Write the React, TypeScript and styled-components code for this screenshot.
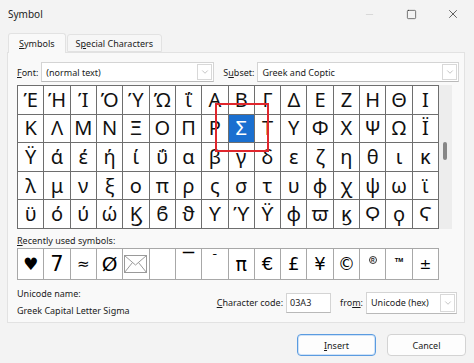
import styled, { createGlobalStyle } from 'styled-components';
import { ChevronDown, Minus, Square, X } from 'lucide-react';

const GlobalStyle = createGlobalStyle`
  html, body {
    margin: 0;
    padding: 0;
    background: #f3f3f3;
  }
  * {
    box-sizing: border-box;
  }
`;

const Window = styled.div`
  width: 474px;
  height: 363px;
  background: #f3f3f3;
  font-family: 'Noto Sans', 'DejaVu Sans', sans-serif;
  color: #1b1b1b;
  display: flex;
  flex-direction: column;
  overflow: hidden;
`;

const TitleBar = styled.div`
  height: 28px;
  display: flex;
  align-items: center;
  padding-left: 8px;
`;

const Title = styled.div`
  flex: 1;
  font-size: 10px;
`;

const WinButton = styled.div<{ dim?: boolean }>`
  width: 42px;
  height: 28px;
  display: flex;
  align-items: center;
  justify-content: center;
  color: ${p => (p.dim ? '#b8b8b8' : '#222')};
`;

const TabBar = styled.div`
  display: flex;
  align-items: flex-end;
  margin-top: 5px;
  padding-left: 8px;
  height: 19px;
`;

const Tab = styled.div<{ active?: boolean }>`
  height: ${p => (p.active ? '20px' : '18px')};
  margin-bottom: ${p => (p.active ? '-1px' : '0')};
  padding: 0 ${p => (p.active ? '10px' : '8px')};
  display: flex;
  align-items: center;
  font-size: 9px;
  background: ${p => (p.active ? '#f9f9f9' : '#f6f6f6')};
  border: 1px solid #e2e2e2;
  border-bottom: ${p => (p.active ? 'none' : '1px solid #e2e2e2')};
  border-radius: 3px 3px 0 0;
  position: relative;
  z-index: ${p => (p.active ? 1 : 0)};
  margin-right: 1px;
`;

const Panel = styled.div`
  margin-left: 7px;
  width: 458px;
  height: 271px;
  background: #f9f9f9;
  border: 1px solid #e2e2e2;
  padding: 9px 0 0 9px;
  display: flex;
  flex-direction: column;
`;

const FieldRow = styled.div`
  display: flex;
  align-items: center;
  height: 20px;
`;

const Label = styled.span<{ gap?: number }>`
  font-size: 9px;
  margin-left: ${p => p.gap ?? 0}px;
  margin-right: 3px;
  white-space: nowrap;
`;

const Select = styled.div<{ w: number; h?: number }>`
  width: ${p => p.w}px;
  height: ${p => p.h ?? 20}px;
  background: #fff;
  border: 1px solid #d4d4d4;
  border-bottom-color: #b9b9b9;
  display: flex;
  align-items: center;
  font-size: 9px;
`;

const SelectValue = styled.span`
  flex: 1;
  padding-left: 4px;
  white-space: nowrap;
`;

const DropButton = styled.span`
  width: 15px;
  align-self: stretch;
  margin: 1px;
  border: 1px solid #d8d8d8;
  display: flex;
  align-items: center;
  justify-content: center;
  color: #8a8a8a;
`;

const GridArea = styled.div`
  display: flex;
  margin-top: 3px;
  position: relative;
`;

const CharGrid = styled.div<{ rows: number; h: number }>`
  width: 422px;
  height: ${p => p.h}px;
  display: grid;
  grid-template-columns: repeat(16, 1fr);
  grid-template-rows: repeat(${p => p.rows}, 1fr);
  gap: 1px;
  padding: 1px;
  background: ${p => (p.rows === 1 ? '#a8a8a8' : '#6e6e6e')};
`;

const Cell = styled.div<{ selected?: boolean }>`
  background: ${p => (p.selected ? '#1a6fd0' : '#fff')};
  color: ${p => (p.selected ? '#fff' : '#111')};
  display: flex;
  align-items: center;
  justify-content: center;
  font-size: 20px;
  line-height: 1;
  overflow: hidden;
`;

const RecentCell = styled(Cell)<{ size?: number; shift?: number; plain?: boolean }>`
  font-size: ${p => p.size ?? 20}px;
  padding-bottom: ${p => p.shift ?? 0}px;
  font-family: ${p =>
    p.plain ? "'Liberation Sans', Arial, sans-serif" : "'DejaVu Sans', 'Noto Sans', sans-serif"};
  font-weight: ${p => (p.plain ? 700 : 400)};
  color: #000;
`;

const RegisteredMark = styled.span`
  width: 8px;
  height: 8px;
  border: 1px solid #333;
  border-radius: 50%;
  display: flex;
  align-items: center;
  justify-content: center;
  font-family: 'Liberation Sans', Arial, sans-serif;
  font-size: 5px;
  font-weight: 700;
  color: #222;
`;

const ScrollTrack = styled.div`
  width: 13px;
  background: #ededed;
  position: relative;
`;

const ScrollThumb = styled.div`
  position: absolute;
  left: 4px;
  top: 57px;
  width: 4px;
  height: 18px;
  border-radius: 2px;
  background: #868686;
`;

const Highlight = styled.div`
  position: absolute;
  left: 198px;
  top: 18px;
  width: 54px;
  height: 49px;
  border: 2px solid #e0262d;
  pointer-events: none;
`;

const SectionLabel = styled.div`
  font-size: 9px;
  margin-top: 4px;
  height: 15px;
  line-height: 15px;
`;

const InfoRow = styled.div`
  display: flex;
  align-items: center;
  margin-top: 7px;
  width: 440px;
`;

const InfoText = styled.div`
  flex: 1;
  display: flex;
  flex-direction: column;
  gap: 3px;
  font-size: 9px;
  line-height: 14px;
`;

const CodeInput = styled.div`
  width: 45px;
  height: 20px;
  background: #fff;
  border: 1px solid #d4d4d4;
  border-bottom-color: #b9b9b9;
  font-size: 9px;
  padding: 2px 3px;
  margin-right: 9px;
`;

const Footer = styled.div`
  display: flex;
  justify-content: flex-end;
  gap: 11px;
  padding-right: 8px;
  margin-top: 11px;
`;

const Button = styled.div<{ primary?: boolean }>`
  width: 79px;
  height: 22px;
  border-radius: 4px;
  background: #fdfdfd;
  border: 1px solid ${p => (p.primary ? '#5a9be0' : '#d3d3d3')};
  box-shadow: ${p => (p.primary ? 'inset 0 0 0 1px #cfe2f7' : 'none')};
  display: flex;
  align-items: center;
  justify-content: center;
  font-size: 9px;
`;

const symbols = [
  'Έ', 'Ή', 'Ί', 'Ό', 'Ύ', 'Ώ', 'ΐ', 'Α', 'Β', 'Γ', 'Δ', 'Ε', 'Ζ', 'Η', 'Θ', 'Ι',
  'Κ', 'Λ', 'Μ', 'Ν', 'Ξ', 'Ο', 'Π', 'Ρ', 'Σ', 'Τ', 'Υ', 'Φ', 'Χ', 'Ψ', 'Ω', 'Ϊ',
  'Ϋ', 'ά', 'έ', 'ή', 'ί', 'ΰ', 'α', 'β', 'γ', 'δ', 'ε', 'ζ', 'η', 'θ', 'ι', 'κ',
  'λ', 'μ', 'ν', 'ξ', 'ο', 'π', 'ρ', 'ς', 'σ', 'τ', 'υ', 'φ', 'χ', 'ψ', 'ω', 'ϊ',
  'ϋ', 'ό', 'ύ', 'ώ', 'Ϗ', 'ϐ', 'ϑ', 'ϒ', 'ϓ', 'ϔ', 'ϕ', 'ϖ', 'ϗ', 'Ϙ', 'ϙ', 'Ϛ',
];

type Recent = { ch: string; size?: number; shift?: number; plain?: boolean };

const recent: Recent[] = [
  { ch: '♥', size: 17 },
  { ch: '7', size: 21 },
  { ch: '≈', size: 15 },
  { ch: 'Ø', size: 20 },
  { ch: 'envelope' },
  { ch: '' },
  { ch: '‾', size: 22, shift: 6 },
  { ch: '¯', size: 12, shift: 10 },
  { ch: 'π', size: 19 },
  { ch: '€', size: 18 },
  { ch: '£', size: 18 },
  { ch: '¥', size: 18 },
  { ch: '©', size: 17 },
  { ch: 'registered', shift: 8 },
  { ch: 'TM', size: 6, shift: 9, plain: true },
  { ch: '±', size: 14 },
];

function Envelope() {
  return (
    <svg width="23" height="18" viewBox="0 0 23 18" fill="none" stroke="#9a9a9a" strokeWidth="1">
      <rect x="0.5" y="0.5" width="22" height="17" />
      <path d="M0.5 0.5 L11.5 10 L22.5 0.5" />
      <path d="M0.5 17.5 L8.5 7.5 M22.5 17.5 L14.5 7.5" />
    </svg>
  );
}

function Dropdown({ value, w, h }: { value: string; w: number; h?: number }) {
  return (
    <Select w={w} h={h}>
      <SelectValue>{value}</SelectValue>
      <DropButton>
        <ChevronDown size={10} strokeWidth={1.2} />
      </DropButton>
    </Select>
  );
}

function recentContent(ch: string) {
  if (ch === 'envelope') return <Envelope />;
  if (ch === 'registered') return <RegisteredMark>R</RegisteredMark>;
  return ch;
}

export default function App() {
  return (
    <>
      <GlobalStyle />
      <Window>
        <TitleBar>
          <Title>Symbol</Title>
          <WinButton dim>
            <Minus size={11} strokeWidth={1} />
          </WinButton>
          <WinButton>
            <Square size={11} strokeWidth={1.3} />
          </WinButton>
          <WinButton>
            <X size={14} strokeWidth={1.2} />
          </WinButton>
        </TitleBar>

        <TabBar>
          <Tab active><u>S</u>ymbols</Tab>
          <Tab>S<u>p</u>ecial Characters</Tab>
        </TabBar>

        <Panel>
          <FieldRow>
            <Label><u>F</u>ont:</Label>
            <Dropdown value="(normal text)" w={173} />
            <Label gap={9}>S<u>u</u>bset:</Label>
            <Dropdown value="Greek and Coptic" w={202} />
          </FieldRow>

          <GridArea>
            <CharGrid rows={5} h={144}>
              {symbols.map((s, i) => (
                <Cell key={i} selected={i === 24}>{s}</Cell>
              ))}
            </CharGrid>
            <ScrollTrack>
              <ScrollThumb />
            </ScrollTrack>
            <Highlight />
          </GridArea>

          <SectionLabel><u>R</u>ecently used symbols:</SectionLabel>
          <CharGrid rows={1} h={32}>
            {recent.map((r, i) => (
              <RecentCell key={i} size={r.size} shift={r.shift} plain={r.plain}>
                {recentContent(r.ch)}
              </RecentCell>
            ))}
          </CharGrid>

          <InfoRow>
            <InfoText>
              <span>Unicode name:</span>
              <span>Greek Capital Letter Sigma</span>
            </InfoText>
            <Label><u>C</u>haracter code:</Label>
            <CodeInput>03A3</CodeInput>
            <Label>fro<u>m</u>:</Label>
            <Dropdown value="Unicode (hex)" w={91} h={22} />
          </InfoRow>
        </Panel>

        <Footer>
          <Button primary><u>I</u>nsert</Button>
          <Button>Cancel</Button>
        </Footer>
      </Window>
    </>
  );
}
